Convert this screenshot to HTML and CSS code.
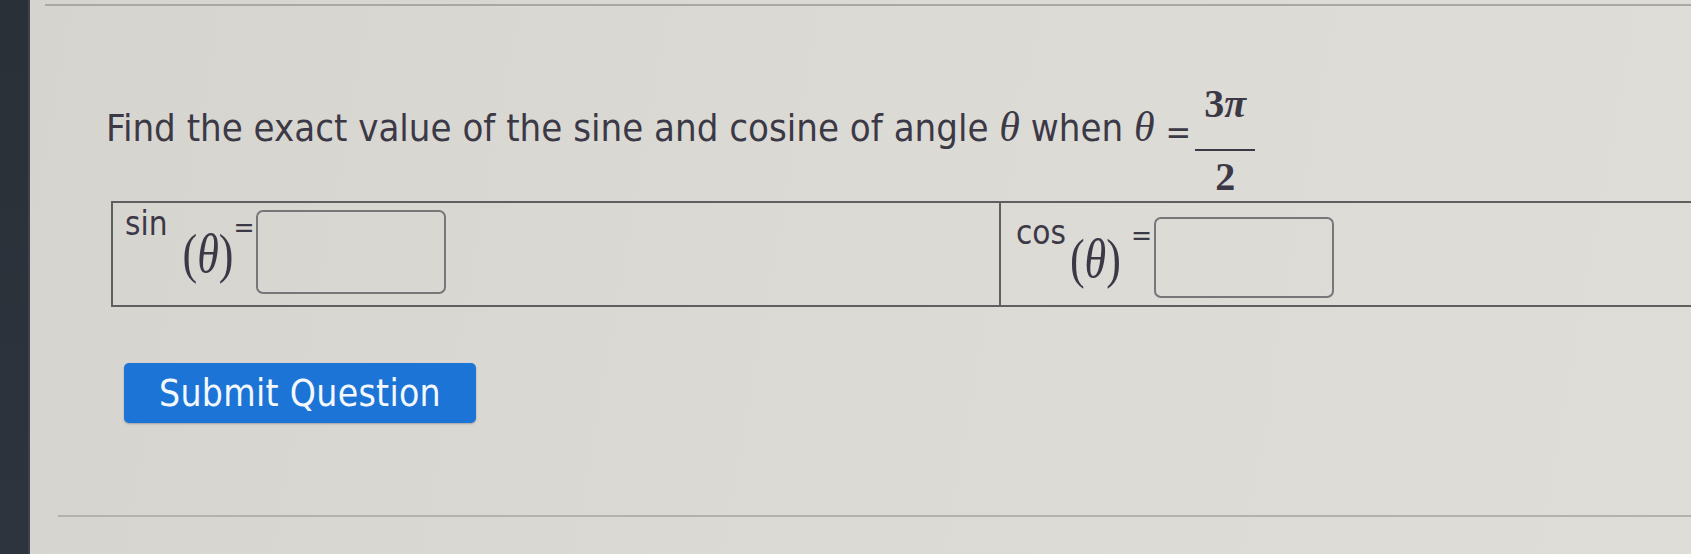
FILE: index.html
```html
<!DOCTYPE html>
<html lang="en">
<head>
    <meta charset="UTF-8">
    <meta name="viewport" content="width=device-width, initial-scale=1.0">
    <title>Question</title>
    <link rel="stylesheet" href="styles.css">
</head>
<body>
    <div class="bezel"></div>

    <div class="screen">
        <div class="top-rule"></div>

        <div class="question">
            <span class="prompt">Find the exact value of the sine and cosine of angle <i class="math">θ</i> when <i class="math">θ</i> <span class="rel">=</span></span>
            <span class="frac">
                <span class="num">3<i>π</i></span>
                <span class="den">2</span>
            </span>
        </div>

        <div class="answers">
            <div class="cell">
                <span class="fn">sin</span>
                <span class="arg">(<i>θ</i>)</span>
                <span class="eq">=</span>
                <input class="answer" type="text">
            </div>
            <div class="cell cell-right">
                <span class="fn">cos</span>
                <span class="arg">(<i>θ</i>)</span>
                <span class="eq">=</span>
                <input class="answer" type="text">
            </div>
        </div>

        <button class="submit">Submit Question</button>

        <div class="bottom-rule"></div>
    </div>
</body>
</html>
```

FILE: styles.css
```css
:root {
    --ink: #3c3947;
    --line: #5f5f60;
    --blue: #1c74d6;
}

* {
    margin: 0;
    padding: 0;
    box-sizing: border-box;
}

html, body {
    height: 100%;
}

body {
    display: flex;
    background: linear-gradient(100deg, #d6d4cf 0%, #dcdad5 50%, #dfddd8 100%);
    color: var(--ink);
    font-family: "DejaVu Sans", Verdana, sans-serif;
    font-stretch: condensed;
    overflow: hidden;
}

.bezel {
    width: 30px;
    flex: none;
    background: linear-gradient(180deg, #2a3038 0%, #2e343d 100%);
    border-right: 2px solid #3c424b;
}

.screen {
    flex: 1;
    display: flex;
    flex-direction: column;
}

.top-rule {
    height: 2px;
    margin: 4px 0 0 15px;
    background: #a9a8a5;
}

/* question line with the stacked fraction */
.question {
    display: flex;
    align-items: flex-start;
    margin: 102px 0 0 76px;
    white-space: nowrap;
}

.prompt {
    font-size: 38px;
    line-height: 38px;
}

.math {
    font-family: "Liberation Serif", "DejaVu Serif", serif;
    font-size: 42px;
}

.rel {
    font-size: 34px;
    vertical-align: -3px;
}

.frac {
    display: inline-flex;
    flex-direction: column;
    align-items: center;
    margin: -24px 0 0 4px;
    font-family: "Liberation Serif", "DejaVu Serif", serif;
    font-size: 40px;
    font-weight: bold;
    line-height: 40px;
}

.num {
    padding: 0 9px 25px;
    border-bottom: 2px solid var(--ink);
}

.den {
    padding-top: 6px;
}

/* answer row */
.answers {
    display: flex;
    margin: 4px 0 0 81px;
    height: 106px;
    border-top: 2px solid var(--line);
    border-bottom: 2px solid var(--line);
    border-left: 2px solid var(--line);
}

.cell {
    display: flex;
    align-items: flex-start;
    width: 888px;
    padding-left: 12px;
    border-right: 2px solid var(--line);
}

.cell-right {
    flex: 1;
    width: auto;
    border-right: none;
    padding-left: 15px;
}

.fn {
    font-size: 33px;
    line-height: 33px;
    margin-top: 4px;
}

.arg {
    font-family: "Liberation Serif", "DejaVu Serif", serif;
    font-size: 44px;
    line-height: 44px;
    margin: 29px 0 0 15px;
    transform: scaleY(1.25);
}

.eq {
    font-size: 28px;
    line-height: 28px;
    margin: 11px 0 0 0;
}

.answer {
    width: 190px;
    height: 84px;
    margin: 7px 0 0 1px;
    background: transparent;
    border: 2px solid #77777a;
    border-radius: 7px;
}

.cell-right .fn {
    margin-top: 13px;
}

.cell-right .arg {
    margin: 34px 0 0 4px;
}

.cell-right .eq {
    margin: 19px 0 0 10px;
}

.cell-right .answer {
    width: 180px;
    height: 81px;
    margin: 14px 0 0 2px;
}

.submit {
    align-self: flex-start;
    margin: 56px 0 0 94px;
    width: 352px;
    height: 60px;
    background: var(--blue);
    color: #f4f8fc;
    border: none;
    border-radius: 5px;
    box-shadow: 0 1px 2px rgba(0, 0, 0, 0.25);
    font-family: "DejaVu Sans", Verdana, sans-serif;
    font-size: 37px;
    font-stretch: condensed;
    letter-spacing: 0.3px;
}

.bottom-rule {
    height: 2px;
    margin: 92px 0 0 28px;
    background: #b3b2ae;
}
```
